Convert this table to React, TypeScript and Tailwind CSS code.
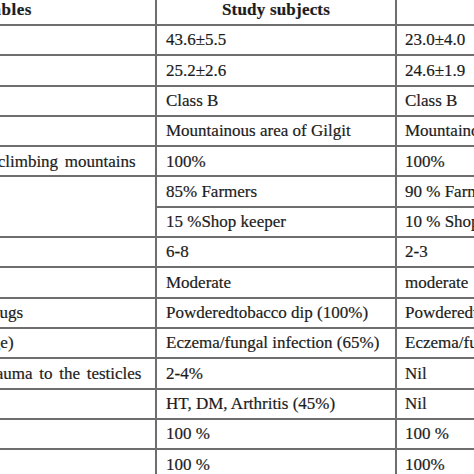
type Row = { label: string; study: string; control: string };

const rows: Row[] = [
  { label: "Age", study: "43.6±5.5", control: "23.0±4.0" },
  { label: "BMI", study: "25.2±2.6", control: "24.6±1.9" },
  { label: "SES", study: "Class B", control: "Class B" },
  { label: "Home", study: "Mountainous area of Gilgit", control: "Mountainous area of Gilgit" },
  { label: "History of climbing mountains", study: "100%", control: "100%" },
];

const rowsAfter: Row[] = [
  { label: "Children", study: "6-8", control: "2-3" },
  { label: "Activity", study: "Moderate", control: "moderate" },
  { label: "Users of drugs", study: "Powderedtobacco dip (100%)", control: "Powderedtobacco dip (100%)" },
  { label: "(skin change)", study: "Eczema/fungal infection (65%)", control: "Eczema/fungal infection (20%)" },
  { label: "Previous trauma to the testicles", study: "2-4%", control: "Nil" },
  { label: "Diseases", study: "HT, DM, Arthritis (45%)", control: "Nil" },
  { label: "Married", study: "100 %", control: "100 %" },
  { label: "Smokers", study: "100 %", control: "100%" },
];

const cell =
  "border-2 border-[#6e6e6e] h-[30.3px] whitespace-nowrap [-webkit-text-stroke:0.2px_#1c1c1c]";
const first = `${cell} pl-[78px] text-left [word-spacing:2.5px]`;
const mid = `${cell} pl-[9px] text-left`;
const last = `${cell} pl-[8px] text-left`;

const BodyRow = ({ row }: { row: Row }) => (
  <tr>
    <td className={first}>{row.label}</td>
    <td className={mid}>{row.study}</td>
    <td className={last}>{row.control}</td>
  </tr>
);

export default function App() {
  return (
    <div className="w-[474px] h-[474px] overflow-hidden bg-white font-['Liberation_Serif',serif] text-[17px] text-[#1c1c1c]">
      <table className="table-fixed border-collapse -ml-[161px] -mt-[6px] w-[796px]">
        <colgroup>
          <col className="w-[316px]" />
          <col className="w-[240px]" />
          <col className="w-[240px]" />
        </colgroup>
        <thead>
          <tr>
            <th className={`${cell} h-[30px] pl-[118px] text-left font-bold tracking-[0.5px]`}>
              Variables
            </th>
            <th className={`${cell} h-[30px] text-center font-bold tracking-[0.2px]`}>Study subjects</th>
            <th className={`${cell} h-[30px] text-center font-bold`}>Controls</th>
          </tr>
        </thead>
        <tbody>
          {rows.map((r) => (
            <BodyRow key={r.label} row={r} />
          ))}
          <tr>
            <td rowSpan={2} className={first}>
              Job
            </td>
            <td className={mid}>85% Farmers</td>
            <td className={last}>90 % Farmers</td>
          </tr>
          <tr>
            <td className={mid}>15 %Shop keeper</td>
            <td className={last}>10 % Shop keeper</td>
          </tr>
          {rowsAfter.map((r) => (
            <BodyRow key={r.label} row={r} />
          ))}
        </tbody>
      </table>
    </div>
  );
}
